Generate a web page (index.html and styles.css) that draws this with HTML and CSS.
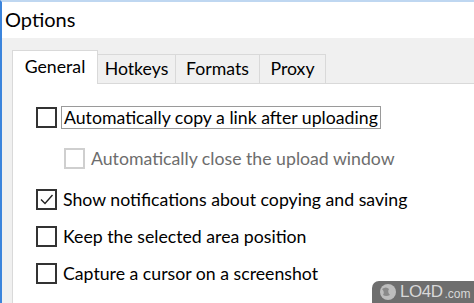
FILE: index.html
```html
<!DOCTYPE html>
<html lang="en">
<head>
  <meta charset="UTF-8">
  <title>Options</title>
  <link rel="stylesheet" href="styles.css">
</head>
<body>
  <!-- Window title -->
  <div class="title">Options</div>

  <div class="main">
    <!-- Tab strip -->
    <div class="tabs">
      <div class="tab active">General</div>
      <div class="tab w-hotkeys">Hotkeys</div>
      <div class="tab w-formats">Formats</div>
      <div class="tab w-proxy">Proxy</div>
    </div>

    <!-- General page -->
    <div class="panel">
      <div class="row">
        <span class="box"></span>
        <span class="label focus">Automatically copy a link after uploading</span>
      </div>
      <div class="row sub disabled">
        <span class="box"></span>
        <span class="label">Automatically close the upload window</span>
      </div>
      <div class="row">
        <span class="box">
          <svg width="17" height="17" viewBox="0 0 17 17"><polyline points="3,8.5 7,12.5 14.5,4" fill="none" stroke="#222" stroke-width="1.4"/></svg>
        </span>
        <span class="label">Show notifications about copying and saving</span>
      </div>
      <div class="row">
        <span class="box"></span>
        <span class="label">Keep the selected area position</span>
      </div>
      <div class="row">
        <span class="box"></span>
        <span class="label">Capture a cursor on a screenshot</span>
      </div>
    </div>
  </div>

  <!-- Watermark -->
  <div class="mark">
    <svg width="20" height="18" viewBox="0 0 20 18">
      <circle cx="10" cy="9" r="8" fill="#bdbdbd"/>
      <path d="M4 6 Q8 3 11 6 Q9 9 12 12 Q8 14 5 12 Q7 9 4 6Z" fill="#8a8a8a"/>
    </svg>
    <span class="mark-name">LO4D</span><span class="mark-dom">.com</span>
  </div>
</body>
</html>
```
FILE: styles.css
```css
/* Window frame */
* { box-sizing: border-box; }

html, body { height: 100%; }

body {
  margin: 0;
  overflow: hidden;
  background: #fff;
  border-left: 2px solid #3b84dc;
  border-top: 2px solid #bfd7f1;
  font-family: 'Lato', 'Liberation Sans', sans-serif;
  color: #000;
  position: relative;
  display: flex;
  flex-direction: column;
}

.title {
  height: 36px;
  flex-shrink: 0;
  padding-left: 3px;
  font-size: 20px;
  line-height: 34px;
}

/* Tabs */
.main {
  flex: 1;
  min-height: 0;
  display: flex;
  flex-direction: column;
  background: #f0f0f0;
  padding: 12px 0 0 10px;
}

.tabs {
  display: flex;
  align-items: flex-end;
  height: 33px;
  flex-shrink: 0;
  font-size: 17.7px;
}

.tab {
  height: 29px;
  line-height: 28px;
  text-align: center;
  border: 1px solid #d9d9d9;
  border-bottom: none;
  border-left: none;
  background: #f0f0f0;
}

.tab.active {
  width: 86px;
  height: 34px;
  line-height: 32px;
  margin-bottom: -1px;
  background: #fff;
  border-left: 1px solid #d9d9d9;
  position: relative;
  z-index: 1;
}

.w-hotkeys { width: 78px; }
.w-formats { width: 84px; }
.w-proxy { width: 66px; }

.panel {
  flex: 1;
  min-height: 0;
  background: #fff;
  border-top: 1px solid #d9d9d9;
  border-left: 1px solid #d9d9d9;
  padding: 23px 0 0 23px;
  display: flex;
  flex-direction: column;
  gap: 16px;
  font-size: 17.7px;
}

/* Checkbox rows */
.row {
  display: flex;
  align-items: center;
  gap: 4px;
  height: 21px;
  flex-shrink: 0;
}

.row.sub {
  margin: 4px 0 4px 28px;
}

.box {
  width: 21px;
  height: 21px;
  border: 2px solid #333;
  display: flex;
}

.label {
  padding: 0 2px;
  line-height: 21px;
  white-space: nowrap;
}

.label.focus {
  border: 1px solid #9a9a9a;
  line-height: 21px;
}

.disabled .box { border-color: #cfcfcf; }
.disabled .label { color: #6d6d6d; }

/* LO4D watermark */
.mark {
  position: absolute;
  right: 0;
  bottom: 0;
  width: 102px;
  height: 22px;
  padding-left: 6px;
  display: flex;
  align-items: center;
  gap: 2px;
  background: rgba(85, 85, 85, 0.85);
  border-top-left-radius: 7px;
  color: #d8d8d8;
  font-family: 'Liberation Sans', sans-serif;
}

.mark-name { font-size: 17px; letter-spacing: -0.5px; }
.mark-dom { font-size: 12px; margin-top: 4px; }
```
